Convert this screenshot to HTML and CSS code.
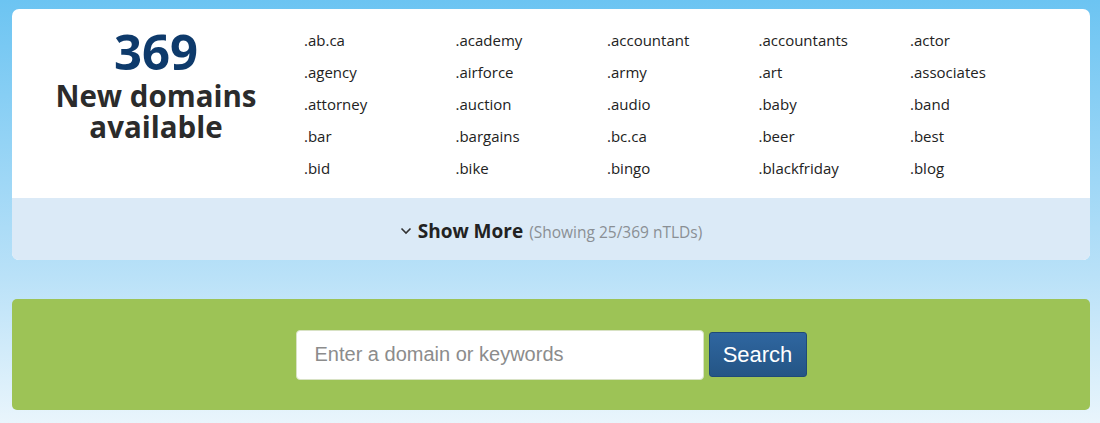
FILE: index.html
```html
<!DOCTYPE html>
<html>
<head>
<meta charset="utf-8">
<link rel="stylesheet" href="styles.css">
</head>
<body>
<div class="page">
  <section class="card">
    <div class="card-top">
      <div class="summary">
        <div class="count">369</div>
        <div class="label">New domains<br>available</div>
      </div>
      <ul class="tlds">
        <li>.ab.ca</li><li>.academy</li><li>.accountant</li><li>.accountants</li><li>.actor</li>
        <li>.agency</li><li>.airforce</li><li>.army</li><li>.art</li><li>.associates</li>
        <li>.attorney</li><li>.auction</li><li>.audio</li><li>.baby</li><li>.band</li>
        <li>.bar</li><li>.bargains</li><li>.bc.ca</li><li>.beer</li><li>.best</li>
        <li>.bid</li><li>.bike</li><li>.bingo</li><li>.blackfriday</li><li>.blog</li>
      </ul>
    </div>
    <div class="card-foot">
      <svg class="chev" width="12" height="8" viewBox="0 0 12 8"><path d="M1.5 1.5 L6 6 L10.5 1.5" fill="none" stroke="#333" stroke-width="1.6"/></svg>
      <span class="more">Show More</span>
      <span class="showing">(Showing 25/369 nTLDs)</span>
    </div>
  </section>
  <section class="search">
    <input class="search-input" type="text" placeholder="Enter a domain or keywords">
    <button class="search-btn">Search</button>
  </section>
</div>
</body>
</html>
```
FILE: styles.css
```css
html, body {
  margin: 0;
  height: 100%;
}
body {
  background: linear-gradient(to bottom, #6cc4f2 0%, #b9e1f8 65%, #e9f5fc 100%);
  font-family: "Open Sans", "Noto Sans", sans-serif;
}
.page {
  padding: 9px 10px 0 12px;
}
.card {
  border-radius: 7px;
  overflow: hidden;
  background: #fff;
}
.card-top {
  display: flex;
  height: 189px;
  box-sizing: border-box;
  padding-top: 15px;
}
.summary {
  width: 288px;
  text-align: center;
  box-sizing: border-box;
}
.count {
  font-size: 49px;
  font-weight: 700;
  color: #0e3a6b;
  line-height: 55px;
}
.label {
  font-size: 29.5px;
  font-weight: 700;
  color: #2b2b2b;
  line-height: 31px;
  margin-top: 1px;
}
.tlds {
  list-style: none;
  margin: 0 0 0 4px;
  padding: 0;
  display: grid;
  grid-template-columns: repeat(5, 151.5px);
  grid-auto-rows: 32px;
  align-content: start;
  font-size: 15px;
  color: #222;
}
.tlds li {
  line-height: 32px;
}
.card-foot {
  height: 62px;
  background: #dbeaf7;
  display: flex;
  align-items: center;
  justify-content: center;
  padding-top: 3px;
  box-sizing: border-box;
}
.chev {
  margin-right: 6px;
  margin-top: 1px;
}
.more {
  font-size: 19px;
  font-weight: 700;
  color: #222;
  margin-right: 6px;
}
.showing {
  font-size: 15.5px;
  color: #8a8f94;
  margin-top: 2px;
}
.search {
  margin-top: 39px;
  height: 111px;
  background: #9dc356;
  border-radius: 5px;
  display: flex;
  align-items: center;
  justify-content: center;
  gap: 5px;
}
.search-input {
  width: 408px;
  height: 50px;
  box-sizing: border-box;
  border: 1px solid #d8e2c4;
  border-radius: 4px;
  padding: 0 18px;
  font-family: "Liberation Sans", Arial, sans-serif;
  font-size: 20px;
  color: #333;
  outline: none;
}
.search-input::placeholder {
  color: #8c8c8c;
}
.search-btn {
  width: 98px;
  height: 45px;
  border: 1px solid #1f4a78;
  border-radius: 3px;
  background: linear-gradient(to bottom, #2f66a0, #245585);
  color: #fff;
  font-family: "Liberation Sans", Arial, sans-serif;
  font-size: 22px;
  padding: 0;
}
```
